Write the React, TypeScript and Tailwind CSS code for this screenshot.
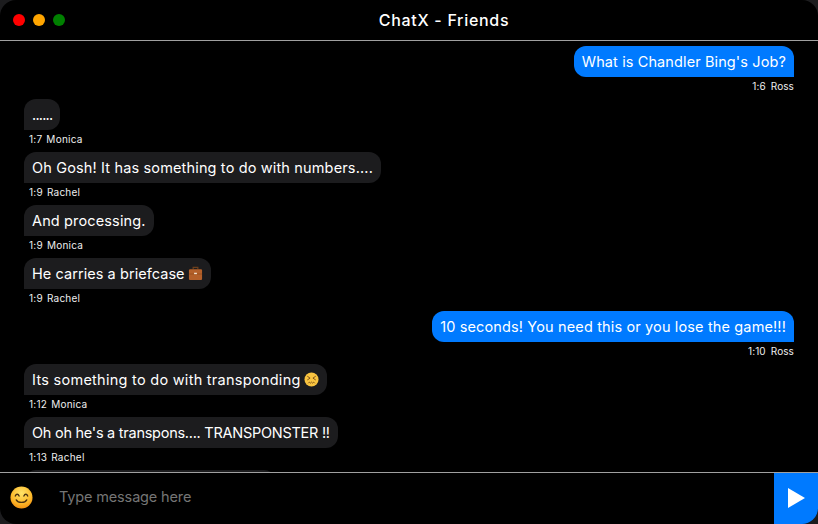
import { type ReactNode } from "react";

type Message = {
  text: string;
  time: string;
  name: string;
  mine?: boolean;
  emoji?: ReactNode;
  tracking: string;
};

function Briefcase() {
  return (
    <svg viewBox="0 0 16 16" className="ml-[3px] h-[15px] w-[15px] shrink-0">
      <path d="M5.500 3.500V1.500h5v2" fill="none" stroke="#6b3f1c" strokeWidth="1.300" />
      <rect x="1" y="3.500" width="14" height="11.500" rx="1.200" fill="#b4602a" />
      <rect x="1" y="8.200" width="14" height="0.700" fill="#8f4a1c" />
      <rect x="6.500" y="7.200" width="3" height="1.500" fill="#f1e3d0" />
    </svg>
  );
}

function WearyFace() {
  return (
    <svg viewBox="0 0 16 16" className="ml-[3px] h-[15px] w-[15px] shrink-0">
      <circle cx="8" cy="8" r="7.500" fill="#f9c440" />
      <path d="M3.500 4.500l3 2-3 2M12.500 4.500l-3 2 3 2" fill="none" stroke="#7a4e18" strokeWidth="1" />
      <path d="M4.500 12l1.200-1.200 1.200 1 1.100-1 1.100 1 1.200-1 1.200 1.200" fill="none" stroke="#7a4e18" strokeWidth="1" />
    </svg>
  );
}

function SmileFace() {
  return (
    <svg viewBox="0 0 24 24" className="h-[23px] w-[23px]">
      <defs>
        <radialGradient id="smile" cx="0.5" cy="0.3" r="0.75">
          <stop offset="0" stopColor="#ffe36a" />
          <stop offset="0.6" stopColor="#fdbb2c" />
          <stop offset="1" stopColor="#f28a0c" />
        </radialGradient>
      </defs>
      <circle cx="12" cy="12" r="11.500" fill="url(#smile)" />
      <path d="M5.500 10.500c1-2.500 3-2.500 4 0M14.500 10.500c1-2.500 3-2.500 4 0" fill="none" stroke="#4a3010" strokeWidth="1.400" strokeLinecap="round" />
      <path d="M6.500 14.500c2 3.500 9 3.500 11 0" fill="none" stroke="#4a3010" strokeWidth="1.400" strokeLinecap="round" />
    </svg>
  );
}

const messages: Message[] = [
  { text: "What is Chandler Bing's Job?", time: "1:6", name: "Ross", mine: true, tracking: "tracking-[0.11px]" },
  { text: "......", time: "1:7", name: "Monica", tracking: "tracking-[-0.8px]" },
  { text: "Oh Gosh! It has something to do with numbers....", time: "1:9", name: "Rachel", tracking: "tracking-[0.15px]" },
  { text: "And processing.", time: "1:9", name: "Monica", tracking: "tracking-[0.14px]" },
  { text: "He carries a briefcase", time: "1:9", name: "Rachel", emoji: <Briefcase />, tracking: "tracking-[0.06px]" },
  { text: "10 seconds! You need this or you lose the game!!!", time: "1:10", name: "Ross", mine: true, tracking: "tracking-[0.14px]" },
  { text: "Its something to do with transponding", time: "1:12", name: "Monica", emoji: <WearyFace />, tracking: "tracking-[0.27px]" },
  { text: "Oh oh he's a transpons.... TRANSPONSTER !!", time: "1:13", name: "Rachel", tracking: "tracking-[-0.26px]" },
];

function Bubble({ message }: { message: Message }) {
  return (
    <div className={message.mine ? "flex shrink-0 flex-col items-end" : "flex shrink-0 flex-col items-start"}>
      <div
        className={
          (message.mine
            ? "flex h-[31px] items-center rounded-xl rounded-br-none bg-[#007aff] px-2 text-[14.5px] text-white "
            : "flex h-[31px] items-center rounded-xl rounded-bl-none bg-[#1c1c1e] px-2 text-[14.5px] text-white ") +
          message.tracking
        }
      >
        {message.text}
        {message.emoji}
      </div>
      <div
        className={
          message.mine
            ? "mb-1 flex h-[18px] items-center gap-[5px] text-[10px] tracking-[0.1px] text-[#eeeeee]"
            : "mb-1 flex h-[18px] items-center gap-1 pl-[5px] text-[10px] tracking-[0.25px] text-[#eeeeee]"
        }
      >
        <span>{message.time}</span>
        <span>{message.name}</span>
      </div>
    </div>
  );
}

export default function App() {
  return (
    <div className="h-[524px] w-[818px] bg-[#1c1c1e] font-['Inter',sans-serif]">
      <div className="flex h-full flex-col overflow-hidden rounded-2xl bg-black">
        {/* Title bar */}
        <header className="relative flex h-[41px] shrink-0 items-center justify-center border-b border-[#a0a0a0] pl-[70px]">
          <div className="absolute left-[13px] top-[14px] flex gap-2">
            <span className="h-3 w-3 rounded-full bg-[#ff0000]" />
            <span className="h-3 w-3 rounded-full bg-[#ffa500]" />
            <span className="h-3 w-3 rounded-full bg-[#008000]" />
          </div>
          <h1 className="text-base font-medium tracking-[0.7px] text-white">ChatX - Friends</h1>
        </header>

        {/* Messages */}
        <main className="flex min-h-0 flex-1 flex-col overflow-hidden pl-6 pr-6 pt-[5px]">
          {messages.map((message, i) => (
            <Bubble key={i} message={message} />
          ))}
          <div className="h-[31px] w-[252px] shrink-0 rounded-xl bg-[#1c1c1e]" />
        </main>

        {/* Input */}
        <footer className="flex h-[52px] shrink-0 items-stretch border-t border-[#a0a0a0]">
          <div className="flex w-[59px] items-center pb-[2px] pl-[10px]">
            <SmileFace />
          </div>
          <input
            placeholder="Type message here"
            className="min-w-0 flex-1 bg-transparent pb-[3px] text-[14.5px] tracking-[-0.15px] text-white outline-none placeholder:text-[#757575]"
          />
          <button type="button" className="flex w-11 items-center justify-center bg-[#007aff] pb-[2px]">
            <svg viewBox="0 0 17 20" className="h-5 w-[17px]">
              <path d="M0 0L17 10L0 20z" fill="#fff" />
            </svg>
          </button>
        </footer>
      </div>
    </div>
  );
}
